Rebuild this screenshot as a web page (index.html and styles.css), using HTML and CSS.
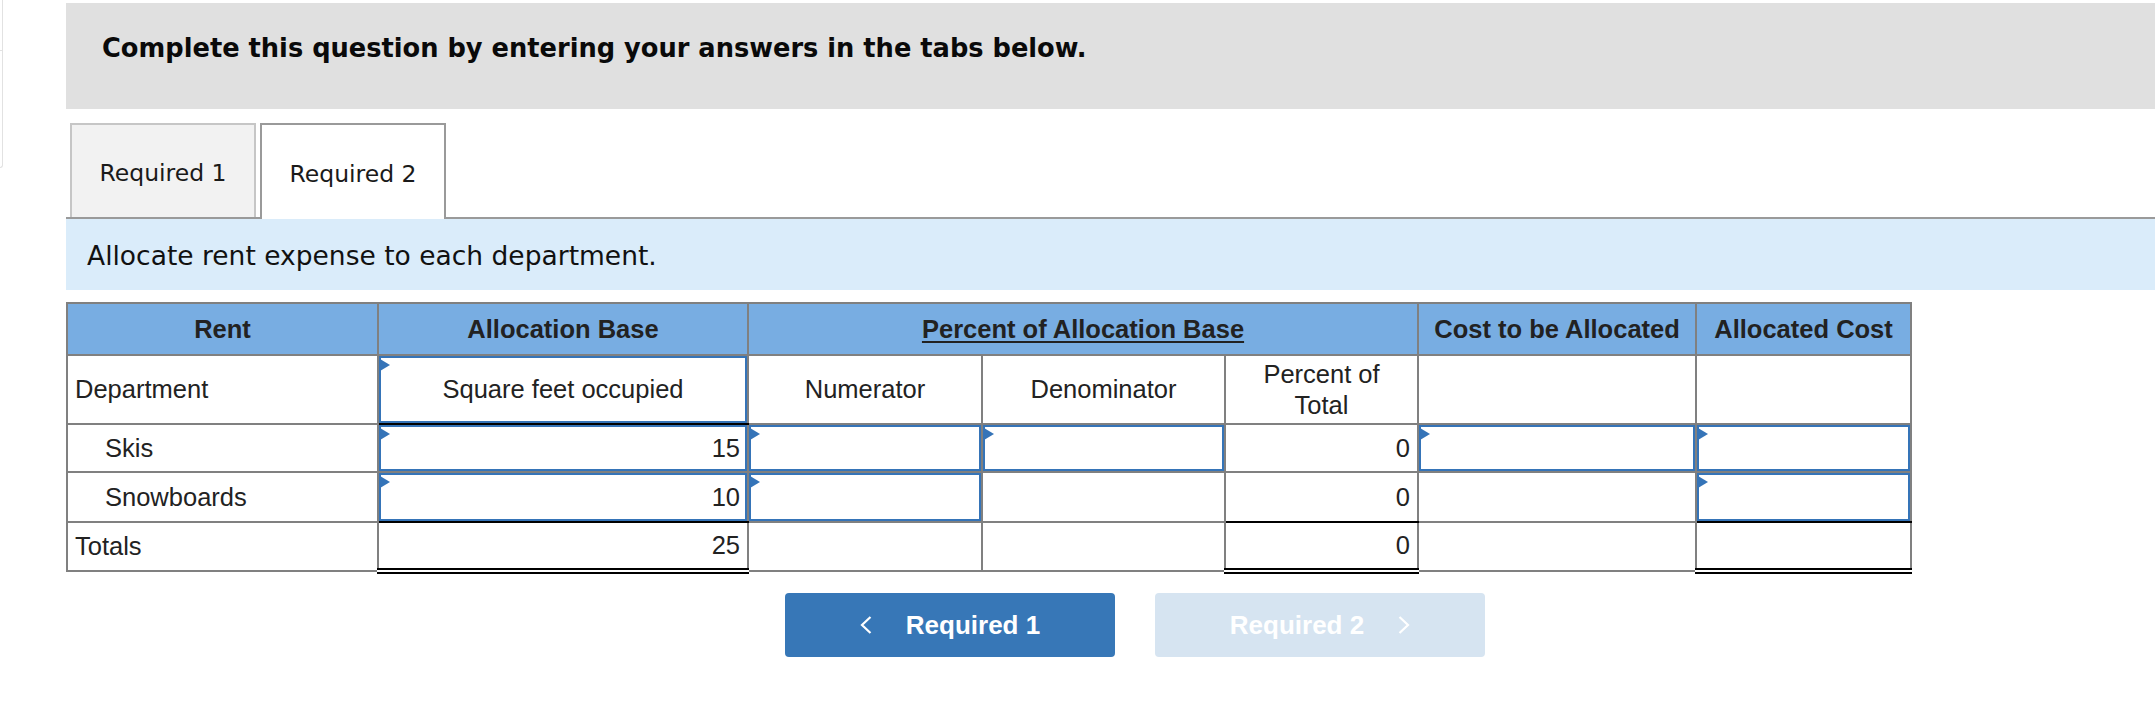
FILE: index.html
```html
<!DOCTYPE html>
<html lang="en">
<head>
<meta charset="utf-8">
<title>Allocate rent expense</title>
<link rel="stylesheet" href="styles.css">
</head>
<body>
<div class="page">
  <div class="side"></div>
  <div class="main">
    <div class="banner">
      <h1 class="title">Complete this question by entering your answers in the tabs below.</h1>
    </div>
    <div class="tabs">
      <div class="tab">Required 1</div>
      <div class="tab active">Required 2</div>
    </div>
    <div class="instr">Allocate rent expense to each department.</div>
    <table class="grid">
      <colgroup>
        <col class="c1"><col class="c2"><col class="c3"><col class="c4"><col class="c5"><col class="c6"><col class="c7">
      </colgroup>
      <thead>
        <tr class="r-head">
          <th>Rent</th>
          <th>Allocation Base</th>
          <th colspan="3"><span class="u">Percent of Allocation Base</span></th>
          <th>Cost to be Allocated</th>
          <th>Allocated Cost</th>
        </tr>
      </thead>
      <tbody>
        <tr class="r-dept">
          <td class="lbl">Department</td>
          <td class="in ctr ul">Square feet occupied</td>
          <td class="ctr">Numerator</td>
          <td class="ctr">Denominator</td>
          <td class="ctr two">Percent of<br>Total</td>
          <td></td>
          <td></td>
        </tr>
        <tr class="r-skis">
          <td class="lbl ind">Skis</td>
          <td class="in num">15</td>
          <td class="in"></td>
          <td class="in"></td>
          <td class="num">0</td>
          <td class="in"></td>
          <td class="in"></td>
        </tr>
        <tr class="r-snow">
          <td class="lbl ind">Snowboards</td>
          <td class="in num ul">10</td>
          <td class="in"></td>
          <td></td>
          <td class="num ul">0</td>
          <td></td>
          <td class="in ul"></td>
        </tr>
        <tr class="r-tot">
          <td class="lbl">Totals</td>
          <td class="num dbl">25</td>
          <td></td>
          <td></td>
          <td class="num dbl">0</td>
          <td></td>
          <td class="dbl"></td>
        </tr>
      </tbody>
    </table>
    <div class="nav">
      <div class="btn btn-prev">
        <svg class="chev" width="12" height="18" viewBox="0 0 12 18"><polyline points="10.5,1 2,9 10.5,17" fill="none" stroke="#ffffff" stroke-width="2.2"/></svg>
        <span>Required 1</span>
      </div>
      <div class="btn btn-next">
        <span>Required 2</span>
        <svg class="chev" width="12" height="18" viewBox="0 0 12 18"><polyline points="1.5,1 10,9 1.5,17" fill="none" stroke="#ffffff" stroke-width="2.2"/></svg>
      </div>
    </div>
  </div>
</div>
</body>
</html>
```
FILE: styles.css
```css
* { box-sizing: border-box; }

html, body {
  margin: 0;
  padding: 0;
  background: #ffffff;
}

.page {
  display: flex;
  align-items: flex-start;
  width: 2155px;
}

.side {
  flex: 0 0 3px;
  width: 3px;
  height: 168px;
  border-right: 1px solid #e2e2e2;
  border-bottom: 1px solid #e2e2e2;
  border-bottom-right-radius: 6px;
  background: linear-gradient(#e2e2e2, #e2e2e2) 0 50px / 100% 1px no-repeat;
}

.main {
  flex: 1;
  margin-left: 63px;
  padding-top: 3px;
}

.banner {
  height: 106px;
  background: #e0e0e0;
  padding: 30px 36px 0;
}

.title {
  margin: 0;
  font-family: "DejaVu Sans", Verdana, sans-serif;
  font-weight: bold;
  font-size: 25.7px;
  line-height: 30px;
  color: #0a0a0a;
}

.tabs {
  display: flex;
  gap: 4px;
  padding-left: 4px;
  margin-top: 14px;
  height: 96px;
  border-bottom: 2px solid #9a9a9a;
}

.tab {
  width: 186px;
  height: 94px;
  display: flex;
  align-items: center;
  justify-content: center;
  padding-top: 3px;
  border: 2px solid #c6c6c6;
  border-bottom: none;
  background: #f2f2f2;
  font-family: "DejaVu Sans", Verdana, sans-serif;
  font-size: 23.5px;
  color: #1a1a1a;
}

.tab.active {
  height: 96px;
  padding-bottom: 2px;
  padding-top: 5px;
  background: #ffffff;
  border-color: #9a9a9a;
  position: relative;
  z-index: 1;
}

.instr {
  height: 71px;
  background: #daecfa;
  padding: 22px 21px 0;
  font-family: "DejaVu Sans", Verdana, sans-serif;
  font-size: 26.5px;
  line-height: 30px;
  color: #111111;
}

.grid {
  margin-top: 12px;
  border-collapse: collapse;
  table-layout: fixed;
  width: 1844px;
  font-family: "Liberation Sans", Arial, sans-serif;
  font-size: 25.5px;
  color: #222222;
}

.c1 { width: 311px; }
.c2 { width: 370px; }
.c3 { width: 234px; }
.c4 { width: 243px; }
.c5 { width: 193px; }
.c6 { width: 278px; }
.c7 { width: 215px; }

.grid th,
.grid td {
  border: 2px solid #808080;
  padding: 0 7px;
  vertical-align: middle;
}

.grid th {
  background: #78ade2;
  font-weight: bold;
  text-align: center;
  white-space: nowrap;
}

.u { text-decoration: underline; text-underline-offset: 3px; }

.r-head { height: 52px; }
.r-dept { height: 69px; }
.r-skis { height: 48px; }
.r-snow { height: 50px; }
.r-tot { height: 49px; }

.grid td.lbl { text-align: left; }
.grid td.ind { padding-left: 37px; }
.grid td.ctr { text-align: center; }
.grid td.two { line-height: 1.2; }
.grid td.num { text-align: right; }

.grid td.in {
  position: relative;
  box-shadow: inset 0 0 0 2px #3574b8;
}

.grid td.in::before {
  content: "";
  position: absolute;
  left: 1px;
  top: 3px;
  border-left: 10px solid #3574b8;
  border-top: 6px solid transparent;
  border-bottom: 6px solid transparent;
}

.grid td.ul { border-bottom: 2px solid #000000; }
.grid td.dbl { border-bottom: 6px double #000000; }

.nav {
  display: flex;
  gap: 40px;
  padding-left: 719px;
  margin-top: 19px;
}

.btn {
  width: 330px;
  height: 64px;
  border-radius: 4px;
  display: flex;
  align-items: center;
  justify-content: center;
  gap: 34px;
  font-family: "Liberation Sans", Arial, sans-serif;
  font-weight: bold;
  font-size: 26px;
  color: #ffffff;
}

.btn-prev { background: #3777b7; }
.btn-next { background: #d6e4f1; }

.chev { display: block; }
```
